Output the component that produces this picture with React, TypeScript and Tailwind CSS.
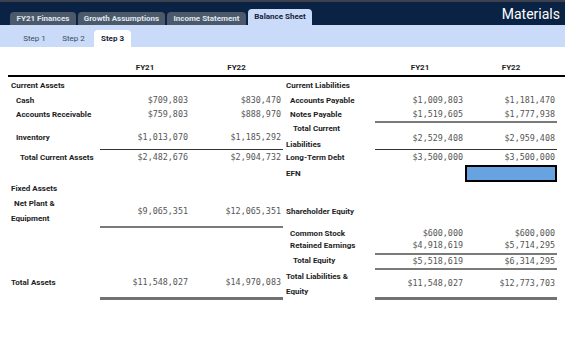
import React from "react";

const grid = "grid grid-cols-[92px_90px_93px_92px_90px_92px]";
const lab = "flex items-center font-bold text-[8px] leading-[15px] text-[#1d1d1d]";
const val = "flex items-center justify-end pr-[2px] font-['DejaVu_Sans_Mono',monospace] text-[8.4px] text-[#555]";
const head = "flex items-center justify-center text-[8px] font-bold text-[#1d1d1d]";
const rule = "border-t-2 border-[#7a7a7a]";

const Tab = ({ label, w, active }: { label: string; w: string; active?: boolean }) => (
  <div
    className={
      active
        ? `${w} h-[16px] rounded-t-[4px] bg-[#c9dbf8] text-[#17233a] flex items-center justify-center text-[8px] font-bold`
        : `${w} h-[13px] rounded-t-[4px] bg-[#4b596b] text-[#dfe6ef] flex items-center justify-center text-[8px] font-bold`
    }
  >
    {label}
  </div>
);

export default function App() {
  return (
    <div className="w-[565px] h-[343px] bg-white font-['Roboto',sans-serif] overflow-hidden">
      {/* top nav */}
      <div className="h-[25px] bg-[#0a2243] border-t-2 border-[#3c414d] flex justify-between">
        <div className="flex items-end gap-[2px] pl-[10px]">
          <Tab label="FY21 Finances" w="w-[66px]" />
          <Tab label="Growth Assumptions" w="w-[87px]" />
          <Tab label="Income Statement" w="w-[79px]" />
          <Tab label="Balance Sheet" w="w-[64px]" active />
        </div>
        <div className="text-white text-[14px] pr-[5px] pt-[2px] leading-[20px]">Materials</div>
      </div>

      {/* steps */}
      <div className="h-[22px] bg-[#c9dbf8] flex items-end gap-[2px] pl-[16px]">
        <div className="w-[37px] h-[17px] flex items-center justify-center pt-[1px] text-[8px] text-[#3e4b5e]">Step 1</div>
        <div className="w-[37px] h-[17px] flex items-center justify-center pt-[1px] text-[8px] text-[#3e4b5e]">Step 2</div>
        <div className="w-[37px] h-[17px] rounded-t-[4px] bg-white flex items-center justify-center text-[8px] font-bold text-[#17233a]">Step 3</div>
      </div>

      {/* balance sheet */}
      <div className="pl-[8px] pt-[13px]">
        <div className={`${grid} h-[17px] border-b-2 border-black`}>
          <div />
          <div className={head}>FY21</div>
          <div className={head}>FY22</div>
          <div />
          <div className={head}>FY21</div>
          <div className={head}>FY22</div>
        </div>

        <div className={`${grid} h-[16px]`}>
          <div className={`${lab} pl-[3px]`}>Current Assets</div>
          <div />
          <div />
          <div className={`${lab} pl-[3px]`}>Current Liabilities</div>
          <div />
          <div />
        </div>

        <div className={`${grid} h-[14px]`}>
          <div className={`${lab} pl-[8px]`}>Cash</div>
          <div className={val}>$709,803</div>
          <div className={val}>$830,470</div>
          <div className={`${lab} pl-[7px]`}>Accounts Payable</div>
          <div className={val}>$1,009,803</div>
          <div className={val}>$1,181,470</div>
        </div>

        <div className={`${grid} h-[14px]`}>
          <div className={`${lab} pl-[8px]`}>Accounts Receivable</div>
          <div className={val}>$759,803</div>
          <div className={val}>$888,970</div>
          <div className={`${lab} pl-[7px]`}>Notes Payable</div>
          <div className={val}>$1,519,605</div>
          <div className={val}>$1,777,938</div>
        </div>

        <div className={`${grid} h-[28px]`}>
          <div className={`${lab} pl-[8px]`}>Inventory</div>
          <div className={val}>$1,013,070</div>
          <div className={val}>$1,185,292</div>
          <div className="flex flex-col justify-center font-bold text-[8px] leading-[16px] text-[#1d1d1d] pl-[3px]">
            <span className="pl-[7px]">Total Current</span>
            <span>Liabilities</span>
          </div>
          <div className={`${val} ${rule}`}>$2,529,408</div>
          <div className={`${val} ${rule}`}>$2,959,408</div>
        </div>

        <div className={`${grid} h-[16px]`}>
          <div className={`${lab} pl-[12px]`}>Total Current Assets</div>
          <div className={`${val} border-t border-[#333]`}>$2,482,676</div>
          <div className={`${val} border-t border-[#333]`}>$2,904,732</div>
          <div className={`${lab} pl-[3px]`}>Long-Term Debt</div>
          <div className={`${val} border-t border-[#333]`}>$3,500,000</div>
          <div className={`${val} border-t border-[#333]`}>$3,500,000</div>
        </div>

        <div className={`${grid} h-[16px]`}>
          <div />
          <div />
          <div />
          <div className={`${lab} pl-[3px]`}>EFN</div>
          <div />
          <div className="flex items-center">
            <div className="w-full h-[17px] border-2 border-black bg-[#68a3e1]" />
          </div>
        </div>

        <div className={`${grid} h-[15px]`}>
          <div className={`${lab} pl-[3px]`}>Fixed Assets</div>
          <div />
          <div />
          <div />
          <div />
          <div />
        </div>

        <div className={`${grid} h-[30px]`}>
          <div className="flex flex-col justify-center font-bold text-[8px] leading-[15px] text-[#1d1d1d] pl-[3px]">
            <span className="pl-[3px]">Net Plant &amp;</span>
            <span>Equipment</span>
          </div>
          <div className={val}>$9,065,351</div>
          <div className={val}>$12,065,351</div>
          <div className={`${lab} pl-[3px]`}>Shareholder Equity</div>
          <div />
          <div />
        </div>

        <div className={`${grid} h-[12px]`}>
          <div />
          <div className={rule} />
          <div className={rule} />
          <div className={`${lab} pl-[7px]`}>Common Stock</div>
          <div className={val}>$600,000</div>
          <div className={val}>$600,000</div>
        </div>

        <div className={`${grid} h-[15px]`}>
          <div />
          <div />
          <div />
          <div className={`${lab} pl-[7px]`}>Retained Earnings</div>
          <div className={val}>$4,918,619</div>
          <div className={val}>$5,714,295</div>
        </div>

        <div className={`${grid} h-[15px]`}>
          <div />
          <div />
          <div />
          <div className={`${lab} pl-[10px]`}>Total Equity</div>
          <div className={`${val} ${rule}`}>$5,518,619</div>
          <div className={`${val} ${rule}`}>$6,314,295</div>
        </div>

        <div className={`${grid} h-[32px]`}>
          <div className={`${lab} pl-[3px] pb-[3px]`}>Total Assets</div>
          <div className={`${val} border-b-[3px] border-[#727272]`}>$11,548,027</div>
          <div className={`${val} border-b-[3px] border-[#727272]`}>$14,970,083</div>
          <div className="flex flex-col justify-center font-bold text-[8px] leading-[15px] text-[#1d1d1d] pl-[3px]">
            <span>Total Liabilities &amp;</span>
            <span>Equity</span>
          </div>
          <div className={`${val} ${rule} border-b-[3px] border-b-[#727272]`}>$11,548,027</div>
          <div className={`${val} ${rule} border-b-[3px] border-b-[#727272]`}>$12,773,703</div>
        </div>
      </div>
    </div>
  );
}
